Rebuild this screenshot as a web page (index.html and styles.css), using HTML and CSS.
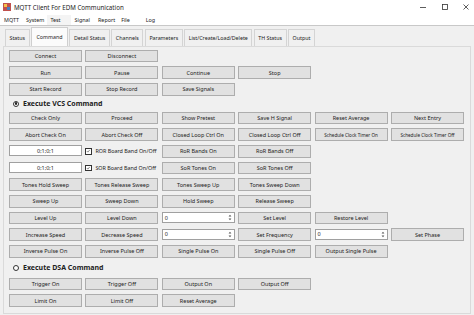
FILE: index.html
```html
<!DOCTYPE html>
<html>
<head>
<meta charset="utf-8">
<link rel="stylesheet" href="styles.css">
</head>
<body>
<div class="window">
  <div class="titlebar">
    <div class="title-left">
      <svg class="appicon" width="8" height="8" viewBox="0 0 8 8"><rect x="0" y="0" width="8" height="8" fill="#c0504d"/><rect x="1" y="1" width="3" height="3" fill="#f5c24a"/><rect x="4" y="4" width="3" height="3" fill="#4a7fc0"/></svg>
      <span class="title">MQTT Client For EDM Communication</span>
    </div>
    <div class="controls">
      <svg width="10" height="10" viewBox="0 0 10 10"><line x1="2" y1="5.5" x2="8" y2="5.5" stroke="#333" stroke-width="0.8"/></svg>
      <svg width="10" height="10" viewBox="0 0 10 10"><rect x="2.5" y="2.5" width="5" height="5" fill="none" stroke="#333" stroke-width="0.8"/></svg>
      <svg width="10" height="10" viewBox="0 0 10 10"><path d="M2.5 2.5 L7.5 7.5 M7.5 2.5 L2.5 7.5" stroke="#333" stroke-width="0.8"/></svg>
    </div>
  </div>
  <div class="menubar">
    <span class="m-mqtt">MQTT</span><span class="m-system">System</span><span class="m-test">Test</span><span class="m-signal">Signal</span><span class="m-report">Report</span><span class="m-file">File</span><span class="m-log">Log</span>
  </div>
  <div class="tabs">
    <span class="tab">Status</span>
    <span class="tab selected">Command</span>
    <span class="tab">Detail Status</span>
    <span class="tab">Channels</span>
    <span class="tab">Parameters</span>
    <span class="tab">List/Create/Load/Delete</span>
    <span class="tab">TH Status</span>
    <span class="tab">Output</span>
  </div>
  <div class="panel">
    <div class="grid">
      <button>Connect</button><button>Disconnect</button><i></i><i></i><i></i><i></i>
      <button>Run</button><button>Pause</button><button>Continue</button><button>Stop</button><i></i><i></i>
      <button>Start Record</button><button>Stop Record</button><button>Save Signals</button><i></i><i></i><i></i>
    </div>
    <div class="section"><span class="radio checked"></span>Execute VCS Command</div>
    <div class="grid">
      <button>Check Only</button><button>Proceed</button><button>Show Pretest</button><button>Save H Signal</button><button>Reset Average</button><button>Next Entry</button>
      <button>Abort Check On</button><button>Abort Check Off</button><button>Closed Loop Ctrl On</button><button>Closed Loop Ctrl Off</button><button class="small">Schedule Clock Timer On</button><button class="small">Schedule Clock Timer Off</button>
      <div class="textbox">0;1;0;1</div><label class="check"><span class="box"><svg width="6" height="6" viewBox="0 0 6 6"><path d="M1 3 L2.5 4.5 L5 1.5" fill="none" stroke="#222" stroke-width="0.7"/></svg></span>ROR Board Band On/Off</label><button>RoR Bands On</button><button>RoR Bands Off</button><i></i><i></i>
      <div class="textbox">0;1;0;1</div><label class="check"><span class="box"><svg width="6" height="6" viewBox="0 0 6 6"><path d="M1 3 L2.5 4.5 L5 1.5" fill="none" stroke="#222" stroke-width="0.7"/></svg></span>SOR Board Band On/Off</label><button>SoR Tones On</button><button>SoR Tones Off</button><i></i><i></i>
      <button>Tones Hold Sweep</button><button>Tones Release Sweep</button><button>Tones Sweep Up</button><button>Tones Sweep Down</button><i></i><i></i>
      <button>Sweep Up</button><button>Sweep Down</button><button>Hold Sweep</button><button>Release Sweep</button><i></i><i></i>
      <button>Level Up</button><button>Level Down</button><div class="spin"><span>0</span><span class="arrows"><svg width="4" height="9" viewBox="0 0 4 9"><path d="M0.6 3.6 L2 1.8 L3.4 3.6Z M0.6 5.4 L2 7.2 L3.4 5.4Z" fill="#555"/></svg></span></div><button>Set Level</button><button>Restore Level</button><i></i>
      <button>Increase Speed</button><button>Decrease Speed</button><div class="spin"><span>0</span><span class="arrows"><svg width="4" height="9" viewBox="0 0 4 9"><path d="M0.6 3.6 L2 1.8 L3.4 3.6Z M0.6 5.4 L2 7.2 L3.4 5.4Z" fill="#555"/></svg></span></div><button>Set Frequency</button><div class="spin"><span>0</span><span class="arrows"><svg width="4" height="9" viewBox="0 0 4 9"><path d="M0.6 3.6 L2 1.8 L3.4 3.6Z M0.6 5.4 L2 7.2 L3.4 5.4Z" fill="#555"/></svg></span></div><button>Set Phase</button>
      <button>Inverse Pulse On</button><button>Inverse Pulse Off</button><button>Single Pulse On</button><button>Single Pulse Off</button><button>Output Single Pulse</button><i></i>
    </div>
    <div class="section dsa"><span class="radio"></span>Execute DSA Command</div>
    <div class="grid">
      <button>Trigger On</button><button>Trigger Off</button><button>Output On</button><button>Output Off</button><i></i><i></i>
      <button>Limit On</button><button>Limit Off</button><button>Reset Average</button><i></i><i></i><i></i>
    </div>
  </div>
</div>
</body>
</html>
```
FILE: styles.css
```css
* { box-sizing: border-box; }
html, body { margin: 0; padding: 0; }
body {
  width: 474px;
  height: 315px;
  overflow: hidden;
  background: #f0f0f0;
  font-family: "Noto Sans", "Open Sans", sans-serif;
  color: #222;
}
.window { width: 474px; height: 315px; display: flex; flex-direction: column; }
.titlebar {
  height: 14px;
  background: #ffffff;
  display: flex;
  align-items: center;
  justify-content: space-between;
  padding-left: 3px;
}
.title-left { display: flex; align-items: center; gap: 3px; }
.appicon { display: block; }
.title { font-size: 6.2px; color: #222; }
.controls { display: flex; gap: 11.5px; padding-right: 3px; }
.controls svg { display: block; }
.menubar {
  height: 12px;
  background: #ffffff;
  border-bottom: 1px solid #c8c8c8;
  display: flex;
  align-items: center;
  padding-left: 4px;
  font-size: 5.4px;
}
.menubar span { white-space: nowrap; }
.m-mqtt { margin-right: 7px; }
.m-system { margin-right: 3px; }
.m-test { background: #f4f4f4; padding: 1px 10px 1px 3px; margin-right: 4px; }
.m-signal { margin-right: 8px; }
.m-report { margin-right: 6px; }
.m-file { margin-right: 16px; }
.tabs {
  display: flex;
  align-items: flex-end;
  padding: 1px 0 0 5px;
  height: 20px;
  gap: 1.5px;
}
.tab {
  font-size: 5.3px;
  height: 17px;
  display: flex;
  align-items: center;
  padding: 0 3.5px;
  border: 1px solid #d4d4d4;
  border-bottom: none;
  background: #f0f0f0;
  white-space: nowrap;
}
.tab.selected {
  height: 19px;
  background: #fbfbfb;
  border-color: #cfcfcf;
  padding: 0 4.5px;
}
.panel {
  margin: 0 3px;
  height: 268px;
  border: 1px solid #dadada;
  background: #f0f0f0;
  padding: 2.5px 0 0 5px;
}
.grid {
  display: grid;
  grid-template-columns: repeat(6, 73px);
  grid-auto-rows: 12.7px;
  column-gap: 3.4px;
  row-gap: 4px;
}
.grid i { display: block; }
button {
  font-family: inherit;
  font-size: 5.5px;
  color: #222;
  background: #e1e1e1;
  border: 1px solid #adadad;
  margin: 0;
  padding: 0;
  height: 12.7px;
  line-height: 10px;
  white-space: nowrap;
}
button.small { font-size: 4.6px; }
.section {
  display: flex;
  align-items: center;
  font-weight: bold;
  font-size: 7px;
  height: 10px;
  margin: 3px 0 3px 0;
  gap: 4px;
  padding-left: 4px;
}
.section.dsa { margin: 5px 0 5px 0; }
.radio {
  width: 6px;
  height: 6px;
  border-radius: 50%;
  border: 0.8px solid #333;
  background: #fff;
  display: inline-flex;
  align-items: center;
  justify-content: center;
}
.radio.checked::after {
  content: "";
  width: 2.6px;
  height: 2.6px;
  border-radius: 50%;
  background: #222;
}
.textbox {
  background: #fff;
  border: 1px solid #a0a0a0;
  font-size: 5.5px;
  display: flex;
  align-items: center;
  justify-content: center;
  height: 11px;
  margin-top: 0.5px;
}
.check {
  display: flex;
  align-items: center;
  gap: 3.5px;
  font-size: 5.4px;
  white-space: nowrap;
}
.check .box {
  width: 6.5px;
  height: 6.5px;
  border: 0.8px solid #333;
  background: #fff;
  display: flex;
  align-items: center;
  justify-content: center;
}
.check .box svg { display: block; }
.spin {
  background: #fff;
  border: 1px solid #a0a0a0;
  font-size: 5.5px;
  display: flex;
  align-items: center;
  justify-content: space-between;
  padding: 0 1.5px 0 2px;
  height: 11px;
  margin-top: 0.5px;
}
.spin .arrows { display: flex; }
.spin svg { display: block; }
```
